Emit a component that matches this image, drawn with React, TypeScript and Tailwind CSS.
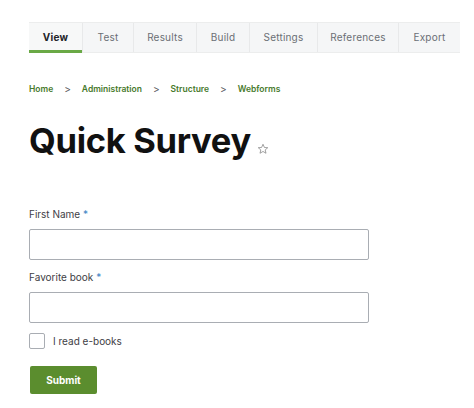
import React from 'react';

const tabs = [
  { label: 'View', w: 'w-[53px]' },
  { label: 'Test', w: 'w-[51px]' },
  { label: 'Results', w: 'w-[63px]' },
  { label: 'Build', w: 'w-[53px]' },
  { label: 'Settings', w: 'w-[68px]' },
  { label: 'References', w: 'w-[81px]' },
  { label: 'Export', w: 'w-[62px]' },
];

const crumbs = ['Home', 'Administration', 'Structure', 'Webforms'];

const App: React.FC = () => {
  return (
    <div className="w-[474px] h-[408px] bg-white overflow-hidden pl-[29px] pt-[22px]" style={{ fontFamily: 'Inter, "Open Sans", sans-serif' }}>
      {/* tabs */}
      <div className="flex w-[431px] h-[31px] bg-[#f5f6f7] border-y border-[#eceded]">
        {tabs.map((t, i) => (
          <div
            key={t.label}
            className={`${t.w} relative flex items-center justify-center text-[10px] tracking-[0.2px] ${
              i === 0 ? 'font-bold text-[#232429] bg-[#f7f8f8]' : 'text-[#6b6f75] border-l border-[#e8e9ea]'
            }`}
          >
            {t.label}
            {i === 0 && <div className="absolute left-0 right-0 bottom-[-1px] h-[3px] bg-[#6aa946]" />}
          </div>
        ))}
      </div>

      {/* breadcrumb */}
      <div className="flex items-center mt-[30px] text-[8.5px] leading-[12px] font-semibold text-[#477a2c]">
        {crumbs.map((c, i) => (
          <React.Fragment key={c}>
            {i > 0 && <span className="mx-[11px] text-[#55565a] font-normal text-[10px]">&gt;</span>}
            <span>{c}</span>
          </React.Fragment>
        ))}
      </div>

      {/* title */}
      <div className="flex items-end mt-[24px] h-[44px]">
        <h1 className="text-[34.5px] leading-[44px] font-bold tracking-[-0.3px] text-[#111]">Quick Survey</h1>
        <svg className="ml-[6px] mb-[8px]" width="12" height="12" viewBox="0 0 24 24" fill="none" stroke="#8a8a8a" strokeWidth="1.6" strokeLinejoin="round">
          <polygon points="12,2.5 14.9,9 21.5,9.4 16.4,13.8 18,20.5 12,16.9 6,20.5 7.6,13.8 2.5,9.4 9.1,9" />
        </svg>
      </div>

      {/* form */}
      <div className="mt-[44px] flex flex-col">
        <label className="text-[10px] text-[#3e4045] leading-[14px]">
          First Name <span className="text-[#3b84c4]">*</span>
        </label>
        <input className="mt-[8px] w-[340px] h-[31px] border border-[#a9adb3] rounded-[2px] outline-none" />
        <label className="mt-[10px] text-[10px] text-[#3e4045] leading-[14px]">
          Favorite book <span className="text-[#3b84c4]">*</span>
        </label>
        <input className="mt-[8px] w-[340px] h-[31px] border border-[#a9adb3] rounded-[2px] outline-none" />
        <div className="flex items-center mt-[10px]">
          <span className="w-[16px] h-[16px] border border-[#a9adb3] rounded-[2px]" />
          <span className="ml-[8px] text-[10px] text-[#3e4045]">I read e-books</span>
        </div>
        <button className="mt-[17px] ml-px w-[67px] h-[28px] bg-[#5b8d2e] text-white text-[10px] font-bold rounded-[2px]">
          Submit
        </button>
      </div>
    </div>
  );
};

export default App;
